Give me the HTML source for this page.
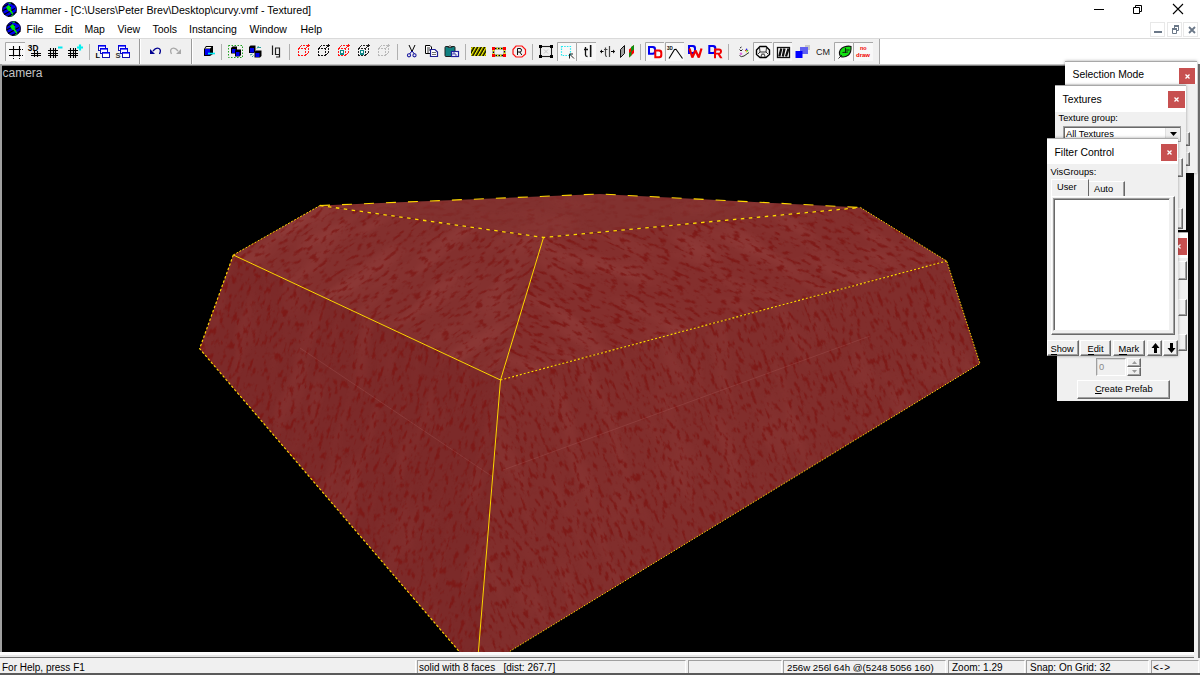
<!DOCTYPE html>
<html><head><meta charset="utf-8">
<style>
*{margin:0;padding:0;box-sizing:border-box}
html,body{width:1200px;height:675px;overflow:hidden;background:#fff;font-family:"Liberation Sans",sans-serif;color:#000}
.a{position:absolute}
.t{position:absolute;white-space:nowrap;line-height:1}
#title{left:0;top:0;width:1200px;height:20px;background:#fff}
#menu{left:0;top:20px;width:1200px;height:18px;background:#fff}
#tb{left:0;top:38px;width:1200px;height:27px;background:#f0f0f0;border-top:1px solid #dadada}
#view{left:0;top:66px;width:1200px;height:592px;background:#000}
#status{left:0;top:658px;width:1200px;height:17px;background:#f0f0f0}
.sp{position:absolute;top:2px;height:13px;border-top:1px solid #a0a0a0;border-left:1px solid #a0a0a0;border-right:1px solid #fff}
.sep{position:absolute;top:6px;width:1px;height:16px;background:#a8a8a8}
.band{position:absolute;top:1px;width:2px;height:24px;border-left:1px solid #a0a0a0;border-right:1px solid #fff}
.pr{position:absolute;top:3px;width:20px;height:19px;background:#f8f8f8;border-top:1px solid #b4b4b4;border-left:1px solid #b4b4b4;border-right:1px solid #fff;border-bottom:1px solid #fff}
.ic{position:absolute;top:5px}
</style></head><body>
<!-- title bar -->
<div id="title" class="a">
  <svg class="a" style="left:1.5px;top:2px" width="15" height="15" viewBox="0 0 15 15"><circle cx="7.5" cy="7.5" r="7.2" fill="#0000f0"/><g stroke="#000" stroke-width="1.1" fill="none"><path d="M1 5 L6 2.5 M0.5 9 L9 4.5 M2 12.5 L13 6.5 M6 14.5 L14.5 10 M9 1 L12 3"/><circle cx="7.5" cy="7.5" r="7" stroke-width=".8"/></g><path d="M4 5.5 L6.5 3 L9.5 6 L8.5 7 L11.5 12 L10.5 12.8 L7 8.5 L6.5 9 Z" fill="#00ee00"/><path d="M6 0.8 L9 0.8 L8 2.5 Z M8.5 14.5 L11 14 L10 12.8 Z" fill="#00e000"/></svg>
  <div class="t" style="left:20.5px;top:5px;font-size:10.65px;color:#000">Hammer - [C:\Users\Peter Brev\Desktop\curvy.vmf - Textured]</div>
  <svg class="a" style="left:1093px;top:3px" width="12" height="12"><path d="M1 6.5 H11" stroke="#000" stroke-width="1"/></svg>
  <svg class="a" style="left:1131px;top:3px" width="12" height="12"><path d="M2.5 4.5 H8.5 V10.5 H2.5 Z M4.5 4.5 V2.5 H10.5 V8.5 H8.5" stroke="#000" stroke-width="1" fill="none"/></svg>
  <svg class="a" style="left:1172px;top:3px" width="12" height="12"><path d="M1 1 L11 11 M11 1 L1 11" stroke="#000" stroke-width="1.1"/></svg>
</div>
<!-- menu bar -->
<div id="menu" class="a">
  <svg class="a" style="left:5.5px;top:0.5px" width="15" height="15" viewBox="0 0 15 15"><circle cx="7.5" cy="7.5" r="7.2" fill="#0000f0"/><g stroke="#000" stroke-width="1.1" fill="none"><path d="M1 5 L6 2.5 M0.5 9 L9 4.5 M2 12.5 L13 6.5 M6 14.5 L14.5 10 M9 1 L12 3"/><circle cx="7.5" cy="7.5" r="7" stroke-width=".8"/></g><path d="M4 5.5 L6.5 3 L9.5 6 L8.5 7 L11.5 12 L10.5 12.8 L7 8.5 L6.5 9 Z" fill="#00ee00"/><path d="M6 0.8 L9 0.8 L8 2.5 Z M8.5 14.5 L11 14 L10 12.8 Z" fill="#00e000"/></svg>
  <div class="t" style="left:26.5px;top:3.5px;font-size:10.5px">File</div>
  <div class="t" style="left:54.5px;top:3.5px;font-size:10.5px">Edit</div>
  <div class="t" style="left:84.5px;top:3.5px;font-size:10.5px">Map</div>
  <div class="t" style="left:117.5px;top:3.5px;font-size:10.5px">View</div>
  <div class="t" style="left:152.5px;top:3.5px;font-size:10.5px">Tools</div>
  <div class="t" style="left:189px;top:3.5px;font-size:10.5px">Instancing</div>
  <div class="t" style="left:249.5px;top:3.5px;font-size:10.5px">Window</div>
  <div class="t" style="left:300.5px;top:3.5px;font-size:10.5px">Help</div>
  <div class="a" style="left:1150px;top:1.5px;width:15px;height:15px;border:1px solid #e8e8e8;background:#fff"><div class="a" style="left:3px;top:8.5px;width:8px;height:2px;background:#6b7888"></div></div>
  <div class="a" style="left:1167px;top:1.5px;width:15px;height:15px;border:1px solid #e8e8e8;background:#fff"><svg class="a" style="left:2.5px;top:2.5px" width="10" height="10"><path d="M1.5 4.5 H5.5 V8.5 H1.5 Z M3.5 4 V1.5 H7.5 V5.5 H6" stroke="#6b7888" fill="none"/><path d="M1 4 H6 M3 1 H8" stroke="#6b7888" stroke-width="2"/></svg></div>
  <div class="a" style="left:1183px;top:1.5px;width:15px;height:15px;border:1px solid #e8e8e8;background:#fff"><svg class="a" style="left:3.5px;top:3.5px" width="8" height="8"><path d="M1 1 L7 7 M7 1 L1 7" stroke="#6b7888" stroke-width="1.8"/></svg></div>
</div>
<!-- toolbar -->
<div id="tb" class="a">
  <div class="a" style="left:880px;top:0;width:320px;height:26px;background:#fff"></div>
</div>
<svg class="a" style="left:0;top:38px" width="880" height="27" viewBox="0 38 880 27">
<defs>
 <pattern id="stripe" width="3" height="4" patternUnits="userSpaceOnUse" patternTransform="rotate(30)"><rect width="3" height="4" fill="#000"/><rect width="1.4" height="4" fill="#ff0"/></pattern>
</defs>
<g fill="none" stroke-linecap="butt">
<!-- pressed boxes -->
<g stroke-width="1">
 <path d="M5.5 61 V42.5 H25" stroke="#a8a8a8"/>
 <path d="M557.5 61 V42.5 H576" stroke="#a8a8a8"/>
 <path d="M576.5 61 V42.5 H596" stroke="#a8a8a8"/>
 <path d="M645.5 61 V42.5 H664" stroke="#a8a8a8"/>
 <path d="M665.5 61 V42.5 H684" stroke="#a8a8a8"/>
 <path d="M753.5 61 V42.5 H772" stroke="#a8a8a8"/>
 <path d="M773.5 61 V42.5 H792" stroke="#a8a8a8"/>
 <path d="M834.5 61 V42.5 H853" stroke="#a8a8a8"/>
 <path d="M853.5 61 V42.5 H873" stroke="#a8a8a8"/>
</g>
<g fill="#f8f8f8" stroke="none">
 <rect x="6" y="43" width="19" height="18"/><rect x="558" y="43" width="18" height="18"/><rect x="577" y="43" width="19" height="18"/>
 <rect x="646" y="43" width="18" height="18"/><rect x="666" y="43" width="18" height="18"/><rect x="754" y="43" width="18" height="18"/>
 <rect x="774" y="43" width="18" height="18"/><rect x="835" y="43" width="18" height="18"/><rect x="854" y="43" width="19" height="18"/>
</g>
<!-- separators -->
<g stroke="#b0b0b0" stroke-width="1">
 <path d="M89.5 44 V60 M221.5 44 V60 M289.5 44 V60 M397.5 44 V60 M465.5 44 V60 M532.5 44 V60 M640.5 44 V60 M728.5 44 V60"/>
</g>
<g stroke-width="1">
 <path d="M139.5 39 V64 M191.5 39 V64" stroke="#9a9a9a"/><path d="M140.5 39 V64 M192.5 39 V64" stroke="#fff"/>
 <path d="M879.5 39 V64" stroke="#a8a8a8"/>
</g>
<!-- 1 grid -->
<g stroke="#000" stroke-width="1.1">
 <path d="M13.5 46 V56.5 M19.5 46 V56.5 M9 49.5 H21 M9 55.5 H21"/>
</g>
<g fill="#000" stroke="none"><rect x="13" y="58" width="1" height="1"/><rect x="19" y="58" width="1" height="1"/><rect x="22" y="49" width="1" height="1"/><rect x="22" y="55" width="1" height="1"/></g>
<!-- 2 3D grid -->
<text x="27.8" y="50.8" font-family="Liberation Sans" font-weight="bold" font-size="8.3" fill="#000" stroke="none">3D</text>
<path d="M34.5 51 V57 M37.5 51 V57 M31 53.5 H41 M31 55.5 H41" stroke="#000" stroke-width="1.1"/>
<!-- 3 grid minus -->
<path d="M50.5 48 V58 M53.5 48 V58 M55.5 48 V58 M48 50.5 H58 M48 53.5 H58 M48 55.5 H58" stroke="#000" stroke-width="1.1"/>
<path d="M58 47.5 H62.5" stroke="#00e8f0" stroke-width="2"/>
<!-- 4 grid plus -->
<path d="M70.5 48 V58 M73.5 48 V58 M75.5 48 V58 M68 50.5 H78 M68 53.5 H78 M68 55.5 H78" stroke="#000" stroke-width="1.1"/>
<path d="M77 47.5 H83 M80 44.5 V50.5" stroke="#00f0f0" stroke-width="2.2"/>
<!-- 6 L windows -->
<text x="95.5" y="57.8" font-family="Liberation Sans" font-weight="bold" font-size="7.5" fill="#000" stroke="none">L</text>
<g stroke="#1010b0" stroke-width="1"><rect x="98.5" y="45.5" width="7" height="5" fill="#f8f8ff"/><rect x="100.5" y="48.5" width="7" height="5" fill="#f8f8ff"/><rect x="102.5" y="52.5" width="7" height="5" fill="#fff"/></g>
<g fill="#0000f0" stroke="none"><rect x="98" y="45" width="8" height="1.6"/><rect x="100" y="48" width="8" height="1.6"/><rect x="102" y="52" width="8" height="1.6"/></g>
<!-- 7 S windows -->
<text x="115.5" y="57.8" font-family="Liberation Sans" font-weight="bold" font-size="7.5" fill="#333" stroke="none">S</text>
<g stroke="#1010b0" stroke-width="1"><rect x="118.5" y="45.5" width="7" height="5" fill="#f8f8ff"/><rect x="120.5" y="48.5" width="7" height="5" fill="#f8f8ff"/><rect x="122.5" y="52.5" width="7" height="5" fill="#fff"/></g>
<g fill="#0000f0" stroke="none"><rect x="118" y="45" width="8" height="1.6"/><rect x="120" y="48" width="8" height="1.6"/><rect x="122" y="52" width="8" height="1.6"/></g>
<!-- 9 undo -->
<path d="M153 51 Q156 47 159 48.5 Q161.5 50 159.5 54" stroke="#000090" stroke-width="1.3"/>
<path d="M150 49 L150 54 L155 54 Z" fill="#000090" stroke="none"/>
<!-- 10 redo -->
<path d="M178 51 Q175 47 172 48.5 Q169.5 50 171.5 54" stroke="#a8a8a8" stroke-width="1.3"/>
<path d="M181 49 L181 54 L176 54 Z" fill="#a8a8a8" stroke="none"/>
<!-- 12 cube arrow -->
<path d="M204 49 L206 46 L213 46 L213 54 L210 56 L204 56 Z" fill="#000" stroke="none"/>
<rect x="205" y="49" width="5" height="6" fill="#0000f0" stroke="none"/><path d="M205 48.5 L206.5 47 L211.5 47 L210 48.5 Z" fill="#fff" stroke="none"/>
<path d="M208 53.5 H215" stroke="#00e8f0" stroke-width="1.6"/>
<!-- 14 group -->
<rect x="228.5" y="45.5" width="14" height="12" stroke="#20a020" stroke-width="1" stroke-dasharray="1.5 1.5"/>
<path d="M231 48 L232.5 46.5 L237 46.5 L237 52 L235.5 53.5 L231 53.5 Z" fill="#000" stroke="none"/><rect x="232" y="49" width="3.5" height="4" fill="#0000f0" stroke="none"/>
<path d="M235 51 L236.5 49.5 L241 49.5 L241 55 L239.5 56.5 L235 56.5 Z" fill="#000" stroke="none"/><rect x="236" y="52" width="3.5" height="4" fill="#0000f0" stroke="none"/>
<!-- 15 ungroup -->
<path d="M249 47 L250.5 45.5 L255.5 45.5 L255.5 51.5 L254 53 L249 53 Z" fill="#000" stroke="none"/><rect x="250" y="48" width="4" height="4.5" fill="#0000f0" stroke="none"/>
<path d="M254.5 52 L256 50.5 L261.5 50.5 L261.5 56 L260 57.5 L254.5 57.5 Z" fill="#000" stroke="none"/><rect x="255.5" y="53" width="4" height="4" fill="#0000f0" stroke="none"/>
<path d="M257 48.5 L258.5 46 M258 47.5 H261 M250 55 L252.5 54 M252 57 L253.5 55.5" stroke="#30a0a0" stroke-width="1"/>
<!-- 16 ig -->
<path d="M272.5 45.5 V55" stroke="#202020" stroke-width="1.2"/>
<path d="M275 48 H279.5 V57 H276 M275.5 48 V54.5 H279" stroke="#202020" stroke-width="1.2"/>
<!-- 18-22 dashed cubes -->
<g fill="#ff1818" stroke="none" shape-rendering="crispEdges"><rect x="298" y="48" width="1" height="1"/><rect x="298" y="49" width="1" height="1"/><rect x="298" y="51" width="1" height="1"/><rect x="298" y="52" width="1" height="1"/><rect x="298" y="54" width="1" height="1"/><rect x="298" y="55" width="1" height="1"/><rect x="299" y="47" width="1" height="1"/><rect x="299" y="48" width="1" height="1"/><rect x="299" y="55" width="1" height="1"/><rect x="300" y="46" width="1" height="1"/><rect x="301" y="45" width="1" height="1"/><rect x="301" y="48" width="1" height="1"/><rect x="301" y="55" width="1" height="1"/><rect x="302" y="48" width="1" height="1"/><rect x="302" y="55" width="1" height="1"/><rect x="303" y="45" width="1" height="1"/><rect x="304" y="45" width="1" height="1"/><rect x="304" y="48" width="1" height="1"/><rect x="304" y="55" width="1" height="1"/><rect x="305" y="48" width="1" height="1"/><rect x="305" y="49" width="1" height="1"/><rect x="305" y="51" width="1" height="1"/><rect x="305" y="52" width="1" height="1"/><rect x="305" y="54" width="1" height="1"/><rect x="305" y="55" width="1" height="1"/><rect x="306" y="45" width="1" height="1"/><rect x="306" y="47" width="1" height="1"/><rect x="306" y="54" width="1" height="1"/><rect x="307" y="45" width="1" height="1"/><rect x="307" y="46" width="1" height="1"/><rect x="307" y="53" width="1" height="1"/><rect x="308" y="44" width="1" height="1"/><rect x="308" y="45" width="1" height="1"/><rect x="308" y="46" width="1" height="1"/><rect x="308" y="48" width="1" height="1"/><rect x="308" y="49" width="1" height="1"/><rect x="308" y="51" width="1" height="1"/><rect x="308" y="52" width="1" height="1"/><rect x="309" y="45" width="1" height="1"/></g><g fill="#101010" stroke="none" shape-rendering="crispEdges"><rect x="318" y="48" width="1" height="1"/><rect x="318" y="49" width="1" height="1"/><rect x="318" y="51" width="1" height="1"/><rect x="318" y="52" width="1" height="1"/><rect x="318" y="54" width="1" height="1"/><rect x="318" y="55" width="1" height="1"/><rect x="319" y="47" width="1" height="1"/><rect x="319" y="48" width="1" height="1"/><rect x="319" y="55" width="1" height="1"/><rect x="320" y="46" width="1" height="1"/><rect x="321" y="45" width="1" height="1"/><rect x="321" y="48" width="1" height="1"/><rect x="321" y="55" width="1" height="1"/><rect x="322" y="48" width="1" height="1"/><rect x="322" y="55" width="1" height="1"/><rect x="323" y="45" width="1" height="1"/><rect x="324" y="45" width="1" height="1"/><rect x="324" y="48" width="1" height="1"/><rect x="324" y="55" width="1" height="1"/><rect x="325" y="48" width="1" height="1"/><rect x="325" y="49" width="1" height="1"/><rect x="325" y="51" width="1" height="1"/><rect x="325" y="52" width="1" height="1"/><rect x="325" y="54" width="1" height="1"/><rect x="325" y="55" width="1" height="1"/><rect x="326" y="45" width="1" height="1"/><rect x="326" y="47" width="1" height="1"/><rect x="326" y="54" width="1" height="1"/><rect x="327" y="45" width="1" height="1"/><rect x="327" y="46" width="1" height="1"/><rect x="327" y="53" width="1" height="1"/><rect x="328" y="44" width="1" height="1"/><rect x="328" y="45" width="1" height="1"/><rect x="328" y="46" width="1" height="1"/><rect x="328" y="48" width="1" height="1"/><rect x="328" y="49" width="1" height="1"/><rect x="328" y="51" width="1" height="1"/><rect x="328" y="52" width="1" height="1"/><rect x="329" y="45" width="1" height="1"/></g><g fill="#ff1818" stroke="none" shape-rendering="crispEdges"><rect x="338" y="48" width="1" height="1"/><rect x="338" y="49" width="1" height="1"/><rect x="338" y="51" width="1" height="1"/><rect x="338" y="52" width="1" height="1"/><rect x="338" y="54" width="1" height="1"/><rect x="338" y="55" width="1" height="1"/><rect x="339" y="47" width="1" height="1"/><rect x="339" y="48" width="1" height="1"/><rect x="339" y="55" width="1" height="1"/><rect x="340" y="46" width="1" height="1"/><rect x="341" y="45" width="1" height="1"/><rect x="341" y="48" width="1" height="1"/><rect x="341" y="55" width="1" height="1"/><rect x="342" y="48" width="1" height="1"/><rect x="342" y="55" width="1" height="1"/><rect x="343" y="45" width="1" height="1"/><rect x="344" y="45" width="1" height="1"/><rect x="344" y="48" width="1" height="1"/><rect x="344" y="55" width="1" height="1"/><rect x="345" y="48" width="1" height="1"/><rect x="345" y="49" width="1" height="1"/><rect x="345" y="51" width="1" height="1"/><rect x="345" y="52" width="1" height="1"/><rect x="345" y="54" width="1" height="1"/><rect x="345" y="55" width="1" height="1"/><rect x="346" y="45" width="1" height="1"/><rect x="346" y="47" width="1" height="1"/><rect x="346" y="54" width="1" height="1"/><rect x="347" y="45" width="1" height="1"/><rect x="347" y="46" width="1" height="1"/><rect x="347" y="53" width="1" height="1"/><rect x="348" y="44" width="1" height="1"/><rect x="348" y="45" width="1" height="1"/><rect x="348" y="46" width="1" height="1"/><rect x="348" y="48" width="1" height="1"/><rect x="348" y="49" width="1" height="1"/><rect x="348" y="51" width="1" height="1"/><rect x="348" y="52" width="1" height="1"/><rect x="349" y="45" width="1" height="1"/></g><rect x="340" y="50" width="4" height="5" fill="#108888" stroke="none"/><rect x="341" y="51" width="2" height="2" fill="#e8ffff" stroke="none"/><g fill="#202020" stroke="none" shape-rendering="crispEdges"><rect x="358" y="48" width="1" height="1"/><rect x="358" y="49" width="1" height="1"/><rect x="358" y="51" width="1" height="1"/><rect x="358" y="52" width="1" height="1"/><rect x="358" y="54" width="1" height="1"/><rect x="358" y="55" width="1" height="1"/><rect x="359" y="47" width="1" height="1"/><rect x="359" y="48" width="1" height="1"/><rect x="359" y="55" width="1" height="1"/><rect x="360" y="46" width="1" height="1"/><rect x="361" y="45" width="1" height="1"/><rect x="361" y="48" width="1" height="1"/><rect x="361" y="55" width="1" height="1"/><rect x="362" y="48" width="1" height="1"/><rect x="362" y="55" width="1" height="1"/><rect x="363" y="45" width="1" height="1"/><rect x="364" y="45" width="1" height="1"/><rect x="364" y="48" width="1" height="1"/><rect x="364" y="55" width="1" height="1"/><rect x="365" y="48" width="1" height="1"/><rect x="365" y="49" width="1" height="1"/><rect x="365" y="51" width="1" height="1"/><rect x="365" y="52" width="1" height="1"/><rect x="365" y="54" width="1" height="1"/><rect x="365" y="55" width="1" height="1"/><rect x="366" y="45" width="1" height="1"/><rect x="366" y="47" width="1" height="1"/><rect x="366" y="54" width="1" height="1"/><rect x="367" y="45" width="1" height="1"/><rect x="367" y="46" width="1" height="1"/><rect x="367" y="53" width="1" height="1"/><rect x="368" y="44" width="1" height="1"/><rect x="368" y="45" width="1" height="1"/><rect x="368" y="46" width="1" height="1"/><rect x="368" y="48" width="1" height="1"/><rect x="368" y="49" width="1" height="1"/><rect x="368" y="51" width="1" height="1"/><rect x="368" y="52" width="1" height="1"/><rect x="369" y="45" width="1" height="1"/></g><rect x="360" y="50" width="4" height="5" fill="#108888" stroke="none"/><rect x="361" y="51" width="2" height="2" fill="#e8ffff" stroke="none"/><g fill="#b8b8b8" stroke="none" shape-rendering="crispEdges"><rect x="378" y="48" width="1" height="1"/><rect x="378" y="49" width="1" height="1"/><rect x="378" y="51" width="1" height="1"/><rect x="378" y="52" width="1" height="1"/><rect x="378" y="54" width="1" height="1"/><rect x="378" y="55" width="1" height="1"/><rect x="379" y="47" width="1" height="1"/><rect x="379" y="48" width="1" height="1"/><rect x="379" y="55" width="1" height="1"/><rect x="380" y="46" width="1" height="1"/><rect x="381" y="45" width="1" height="1"/><rect x="381" y="48" width="1" height="1"/><rect x="381" y="55" width="1" height="1"/><rect x="382" y="48" width="1" height="1"/><rect x="382" y="55" width="1" height="1"/><rect x="383" y="45" width="1" height="1"/><rect x="384" y="45" width="1" height="1"/><rect x="384" y="48" width="1" height="1"/><rect x="384" y="55" width="1" height="1"/><rect x="385" y="48" width="1" height="1"/><rect x="385" y="49" width="1" height="1"/><rect x="385" y="51" width="1" height="1"/><rect x="385" y="52" width="1" height="1"/><rect x="385" y="54" width="1" height="1"/><rect x="385" y="55" width="1" height="1"/><rect x="386" y="45" width="1" height="1"/><rect x="386" y="47" width="1" height="1"/><rect x="386" y="54" width="1" height="1"/><rect x="387" y="45" width="1" height="1"/><rect x="387" y="46" width="1" height="1"/><rect x="387" y="53" width="1" height="1"/><rect x="388" y="44" width="1" height="1"/><rect x="388" y="45" width="1" height="1"/><rect x="388" y="46" width="1" height="1"/><rect x="388" y="48" width="1" height="1"/><rect x="388" y="49" width="1" height="1"/><rect x="388" y="51" width="1" height="1"/><rect x="388" y="52" width="1" height="1"/><rect x="389" y="45" width="1" height="1"/></g>
<!-- 24 scissors -->
<path d="M409 45 L412 51.5 L415 45" stroke="#000" stroke-width="1"/>
<path d="M412 51 L409.5 54 M412 51 L414.5 54" stroke="#0000a0" stroke-width="1"/>
<circle cx="409" cy="55.3" r="1.6" stroke="#2020a0" stroke-width="1.1"/><circle cx="414.5" cy="55.3" r="1.6" stroke="#2020a0" stroke-width="1.1"/>
<!-- 25 copy -->
<path d="M425.5 45.5 H430 L431.5 47 V53.5 H425.5 Z" stroke="#000" fill="#fff" stroke-width="1"/>
<path d="M427 48 H430 M427 50 H430 M427 52 H429" stroke="#000" stroke-width=".8"/>
<path d="M430.5 49.5 H435 L437.5 52 V56.5 H430.5 Z" stroke="#202090" fill="#fff" stroke-width="1.2"/>
<path d="M432 52.5 H436 M432 54.5 H436" stroke="#606060" stroke-width=".9"/>
<!-- 26 paste -->
<rect x="445" y="46.5" width="10" height="10" rx="1" fill="#108080" stroke="#202020" stroke-width="1"/>
<path d="M448 47.5 L450 45.5 L452 47.5 Z" fill="#fff" stroke="#202020" stroke-width=".8"/>
<rect x="451.5" y="51.5" width="7" height="5" fill="#fff" stroke="#2020a0" stroke-width="1.2"/>
<path d="M453 55 V53 H455 V55 H457" stroke="#2020a0" stroke-width=".8"/>
<!-- 28 stripes -->
<rect x="471" y="47" width="15" height="9" fill="url(#stripe)" stroke="none"/>
<!-- 29 dashed box -->
<rect x="493.5" y="48.5" width="11" height="7" stroke="#000" stroke-width="1.6"/>
<rect x="493.5" y="48.5" width="11" height="7" stroke="#ff0" stroke-width="1.6" stroke-dasharray="1.5 1.5"/>
<g fill="#ff0000" stroke="none"><rect x="492" y="47" width="3" height="3"/><rect x="503" y="47" width="3" height="3"/><rect x="492" y="54" width="3" height="3"/><rect x="503" y="54" width="3" height="3"/></g>
<!-- 30 circle R -->
<path d="M516 46 L522 46 L525.5 49.5 L525.5 54 L522 57 L516 57 L513 54 L513 49.5 Z" stroke="#ff1010" stroke-width="1.2"/>
<path d="M517.5 55 V48.5 H520 Q521.5 48.5 521.5 50.2 Q521.5 52 520 52 H517.5 M519.8 52 L521.8 55" stroke="#101010" stroke-width="1"/>
<!-- 32 square with corners -->
<rect x="540.5" y="46.5" width="11" height="10" stroke="#202020" stroke-width="1.1"/>
<path d="M544 49.5 L548 53.5 M548 49.5 L544 53.5" stroke="#c8c8c8" stroke-width="1"/>
<g fill="#000" stroke="none"><rect x="539" y="45" width="3" height="3"/><rect x="550" y="45" width="3" height="3"/><rect x="539" y="55" width="3" height="3"/><rect x="550" y="55" width="3" height="3"/></g>
<!-- 33 select -->
<rect x="561.5" y="46.5" width="9" height="9" stroke="#20e8f0" stroke-width="1.2" stroke-dasharray="1.5 1.2"/>
<path d="M569.5 54 V58.5 M569.5 54 H573 M570 54.5 L574 58.5" stroke="#202020" stroke-width="1"/>
<!-- 34 tl -->
<path d="M585.5 47 V55 Q585.5 56.5 587.5 56.5 M584 49.5 H588 M590.5 45 V57" stroke="#101010" stroke-width="1.3"/><path d="M591.5 45 V57" stroke="#909090" stroke-width="1"/>
<!-- 35 <tl> -->
<path d="M605.5 47.5 V55 Q605.5 56.5 607 56.5 M604 49.5 H607.5 M609.5 46 V57" stroke="#484848" stroke-width="1.2"/>
<path d="M600.5 51.5 H603.5 M611 51.5 H614.5" stroke="#000" stroke-width="1"/>
<path d="M600 51.5 L602 49.5 V53.5 Z M615 51.5 L613 49.5 V53.5 Z" fill="#000" stroke="none"/>
<!-- 36 slanted -->
<path d="M620.5 57.5 V49.5 L624.5 45.5 V53.5 Z" fill="#a0a0a0" stroke="#101010" stroke-width="1"/>
<path d="M629 57.5 V49.5 L634 45 V53 Z" fill="#ff0000" stroke="none"/>
<path d="M631 47 L634 45 V49.5 L631 52 Z M629 53 L631.5 51 V55.5 L629 57.5 Z" fill="#109010" stroke="none"/>
<!-- 38 DD -->
<path fill-rule="evenodd" fill="#0000f0" stroke="none" d="M648 46 H653 Q656 46 656 49 V51.7 Q656 54.7 653 54.7 H648 Z M650 48 H652.5 Q654 48 654 49.5 V51.2 Q654 52.7 652.5 52.7 H650 Z"/><path fill-rule="evenodd" fill="#f00000" stroke="none" d="M654.3 49.5 H659.3 Q662.3 49.5 662.3 52.5 V55.3 Q662.3 58.3 659.3 58.3 H654.3 Z M656.3 51.5 H658.8 Q660.3 51.5 660.3 53.0 V54.8 Q660.3 56.3 658.8 56.3 H656.3 Z"/>
<!-- 39 3D ^ -->
<text x="667" y="49.5" font-family="Liberation Sans" font-weight="bold" font-size="4.5" fill="#000" stroke="none">3D</text>
<path d="M669 58.5 L674.5 49.5 L676 49.3 L682.5 58.5" stroke="#000" stroke-width="1.1"/>
<!-- 40 DW -->
<path fill-rule="evenodd" fill="#0000f0" stroke="none" d="M688 45 H693 Q696 45 696 48 V51 Q696 54 693 54 H688 Z M690 47 H692.5 Q694 47 694 48.5 V50.5 Q694 52 692.5 52 H690 Z"/><path d="M689.5 48.5 L692.3 57.5 L695.5 50.5 L698.8 57.5 L701.5 48.5" stroke="#f00000" stroke-width="2.2" stroke-linejoin="bevel"/>
<!-- 41 DR -->
<path fill-rule="evenodd" fill="#0000f0" stroke="none" d="M708.3 45 H713.3 Q716.3 45 716.3 48 V51 Q716.3 54 713.3 54 H708.3 Z M710.3 47 H712.8 Q714.3 47 714.3 48.5 V50.5 Q714.3 52 712.8 52 H710.3 Z"/><path fill-rule="evenodd" fill="#f00000" stroke="none" d="M714 48.5 H719 Q722 48.5 722 51.5 Q722 53.8 720 54.3 L722.5 58.3 H720 L717.8 54.6 H716 V58.3 H714 Z M716 50.4 H719 Q720 50.4 720 51.6 Q720 52.8 719 52.8 H716 Z"/>
<!-- 43 joystick -->
<path d="M739.5 49.5 L741 51 L742.5 49.5 M740 48 L741.5 47" stroke="#202020" stroke-width="1"/>
<path d="M739.5 55.5 Q741 57.5 744 56 L749 52.5" stroke="#303030" stroke-width="1"/>
<circle cx="741" cy="53.8" r="1.3" fill="#e070e0" stroke="none"/><circle cx="745.8" cy="50.5" r=".8" fill="#e02020" stroke="none"/><circle cx="747.5" cy="50.8" r=".8" fill="#20c020" stroke="none"/><circle cx="746.6" cy="49.4" r=".8" fill="#2020e0" stroke="none"/><circle cx="746.6" cy="51.8" r=".8" fill="#e0e020" stroke="none"/>
<!-- 44 octagon -->
<path d="M760 46.5 H766 L769.5 50 V54.5 L766 57.5 H760 L756.5 54.5 V50 Z" stroke="#000" stroke-width="1.4" fill="#f4f4f4"/>
<path d="M759.5 47.5 L760 52 L758 54 M766.5 47.5 L766 52 L768 54 M760 52 H766 M761 57 L761.5 54.5 H764.5 L765 57" stroke="#202020" stroke-width=".9"/>
<rect x="761.5" y="53" width="3" height="1.5" fill="#a0a0a0" stroke="none"/>
<!-- 45 W stripes -->
<rect x="777.5" y="47.5" width="12" height="10" stroke="#101010" stroke-width="1.3" fill="#fff"/>
<path d="M779.3 56.5 L781.3 48.5 M782.8 56.5 L784.5 48.5 M786 56.5 L788.5 48.5" stroke="#101010" stroke-width="2.3"/>
<!-- 46 blue squares -->
<rect x="805" y="45" width="5" height="5" fill="#c8c8c8" stroke="none"/>
<rect x="800" y="47" width="8" height="7" fill="#6060f0" stroke="none"/>
<rect x="795.5" y="51" width="7" height="7" fill="#0000ff" stroke="none"/>
<!-- 47 CM -->
<text x="816" y="55" font-family="Liberation Sans" font-size="9.5" fill="#202020" stroke="none" transform="translate(816 0) scale(0.95 1) translate(-816 0)">CM</text>
<!-- 48 leaf -->
<path d="M839.5 54 Q839 49 844 47 Q848.5 45.5 851 46.5 Q851.5 52 848.5 55 Q844.5 58 840.5 56.5 Z" fill="#10e010" stroke="#101010" stroke-width="1.1"/>
<path d="M838.5 58.5 L842 55 M845.5 48 V53 M846 50 H849.5 M842.5 52.5 L848 52" stroke="#101010" stroke-width=".9"/>
<!-- 49 no draw -->
<text x="860" y="50" font-family="Liberation Sans" font-weight="bold" font-size="5.5" fill="#f00000" stroke="none">no</text>
<text x="856" y="57" font-family="Liberation Sans" font-weight="bold" font-size="6" fill="#f00000" stroke="none">draw</text>
</g>
</svg>

<!-- viewport -->
<div class="a" style="left:0;top:64px;width:1200px;height:1px;background:#c4c4c4"></div>
<div class="a" style="left:0;top:65px;width:1200px;height:1px;background:#7a7a7a"></div>
<div id="view" class="a">
  <div class="a" style="left:0;top:-2px;width:2px;height:588px;background:#a0a0a0"></div>
  <div class="t" style="left:2.5px;top:1px;font-size:12px;color:#c4c4c4">camera</div>
  <div class="a" style="left:1194px;top:-2px;width:4px;height:594px;background:#f0f0f0"></div>
  <div class="a" style="left:1198px;top:-2px;width:2px;height:594px;background:#6e6e6e"></div>
  <div class="a" style="left:0;top:586px;width:1194px;height:3px;background:#fbfbfb"></div>
  <div class="a" style="left:0;top:589px;width:1194px;height:2px;background:#e6e6e6"></div>
  <div class="a" style="left:0;top:591px;width:1194px;height:1px;background:#6e6e6e"></div>
</div>
<svg class="a" style="left:0;top:0" width="1200" height="675" viewBox="0 0 1200 675">
<defs>
 <clipPath id="vc"><rect x="2" y="66" width="1192" height="586"/></clipPath>
 <clipPath id="cfT"><polygon points="320,205.5 600,194 860.5,207.5 543.5,237.5"/></clipPath><clipPath id="cfUL"><polygon points="233.3,255 320,205.5 543.5,237.5 500.5,380"/></clipPath><clipPath id="cfUR"><polygon points="543.5,237.5 860.5,207.5 946.7,261 500.5,380"/></clipPath><clipPath id="cfLL"><polygon points="199.6,348.7 233.3,255 500.5,380 478.4,652 459.6,652"/></clipPath><clipPath id="cfLR"><polygon points="500.5,380 946.7,261 980,363.5 508.7,652 478.4,652"/></clipPath>
 <filter id="tex" x="0" y="0" width="1" height="1" color-interpolation-filters="sRGB">
  <feTurbulence type="fractalNoise" baseFrequency="0.11 0.25" numOctaves="3" seed="11" result="n"/>
  <feColorMatrix in="n" type="matrix" values="0 0 0 0 0.49  0 0 0 0 0.09  0 0 0 0 0.08  -6 0 0 0 2.65"/>
  <feGaussianBlur stdDeviation="0.5"/>
 </filter>
 <filter id="lite" x="0" y="0" width="1" height="1" color-interpolation-filters="sRGB">
  <feTurbulence type="fractalNoise" baseFrequency="0.012 0.05" numOctaves="2" seed="3"/>
  <feColorMatrix type="matrix" values="0 0 0 0 0.58  0 0 0 0 0.25  0 0 0 0 0.24  1.6 0 0 0 -0.72"/>
 </filter>
</defs>
<g clip-path="url(#vc)">
 <polygon points="320,205.5 600,194 860.5,207.5 543.5,237.5" fill="#82312f"/><g clip-path="url(#cfT)" opacity="0.6"><rect x="90" y="-285" width="1000" height="1000" transform="rotate(-2 590 215)" filter="url(#lite)"/></g><g clip-path="url(#cfT)" opacity="0.25"><rect x="90" y="-285" width="1000" height="1000" transform="rotate(-2 590 215)" filter="url(#tex)"/></g><polygon points="233.3,255 320,205.5 543.5,237.5 500.5,380" fill="#83302e"/><g clip-path="url(#cfUL)"><rect x="-120" y="-200" width="1000" height="1000" transform="rotate(-35 380 300)" filter="url(#lite)"/></g><g clip-path="url(#cfUL)" opacity="0.75"><rect x="-120" y="-200" width="1000" height="1000" transform="rotate(-35 380 300)" filter="url(#tex)"/></g><polygon points="543.5,237.5 860.5,207.5 946.7,261 500.5,380" fill="#842f2d"/><g clip-path="url(#cfUR)"><rect x="240" y="-210" width="1000" height="1000" transform="rotate(25 740 290)" filter="url(#lite)"/></g><g clip-path="url(#cfUR)" opacity="0.85"><rect x="240" y="-210" width="1000" height="1000" transform="rotate(25 740 290)" filter="url(#tex)"/></g><polygon points="199.6,348.7 233.3,255 500.5,380 478.4,652 459.6,652" fill="#7c2a29"/><g clip-path="url(#cfLL)" opacity="0.5"><rect x="-160" y="-50" width="1000" height="1000" transform="rotate(-75 340 450)" filter="url(#lite)"/></g><g clip-path="url(#cfLL)" opacity="0.85"><rect x="-160" y="-50" width="1000" height="1000" transform="rotate(-75 340 450)" filter="url(#tex)"/></g><polygon points="500.5,380 946.7,261 980,363.5 508.7,652 478.4,652" fill="#812e2c"/><g clip-path="url(#cfLR)" opacity="0.5"><rect x="200" y="-50" width="1000" height="1000" transform="rotate(70 700 450)" filter="url(#lite)"/></g><g clip-path="url(#cfLR)" opacity="0.85"><rect x="200" y="-50" width="1000" height="1000" transform="rotate(70 700 450)" filter="url(#tex)"/></g>
 <path d="M300,348 L493,477 M503,470 L870,336" stroke="rgba(200,130,125,0.18)" stroke-width="1" fill="none"/>
 <g fill="none" stroke="#ffd800">
  <path d="M320,205.5 L600,194 L860.5,207.5" stroke-width="1.1" stroke-dasharray="10 12"/>
  <path d="M320,205.5 L543.5,237.5 L860.5,207.5" stroke-width="1.3" stroke-dasharray="3.5 4.5"/>
  <path d="M233.3,255 L500.5,380 M543.5,237.5 L500.5,380 L478.4,652" stroke-width="1"/>
  <path d="M233.3,255 L320,205.5" stroke-width="1" stroke-dasharray="2 1.5"/>
  <path d="M500.5,380 L946.7,261" stroke-width="1.1" stroke-dasharray="2 2"/>
  <path d="M860.5,207.5 L946.7,261 L980,363.5 L508.7,652" stroke-width="1" stroke-dasharray="1.5 1.5"/><path d="M233.3,255 L199.6,348.7 L459.6,652" stroke-width="1.15" stroke-dasharray="2.5 2"/>
 </g>
</g>
</svg>

<!-- floating windows -->
<style>
.win{position:absolute;background:#f0f0f0;box-shadow:0 0 3px rgba(0,0,0,.35)}
.wt{position:absolute;left:0;top:0;right:0;background:#fff;border-top:1px solid #a8a8a8}
.cls{position:absolute;background:#c75050;color:#fff}
.cls svg{position:absolute;left:5px;top:5px}
.dt{position:absolute;white-space:nowrap;line-height:1;font-size:9.3px;color:#000}
.btn{position:absolute;background:#f0f0f0;border-top:1px solid #fff;border-left:1px solid #fff;border-right:1px solid #696969;border-bottom:1px solid #696969;box-shadow:inset -1px -1px 0 #a0a0a0}
</style>
<!-- W1 Selection Mode -->
<div class="win" style="left:1065px;top:61px;width:132px;height:112px">
  <div class="wt" style="height:23px"></div>
  <div class="t" style="left:7.5px;top:9px;font-size:10.4px;color:#000">Selection Mode</div>
  <div class="cls" style="left:114px;top:7px;width:16px;height:16px"><svg width="6" height="6" style="left:6px;top:6px"><path d="M.5 .5 L4.5 4.5 M4.5 .5 L.5 4.5" stroke="#fff" stroke-width="1.3"/></svg></div>
  <div class="btn" style="left:111px;top:71px;width:14px;height:14px"></div>
  <div class="btn" style="left:111px;top:91px;width:14px;height:14px"></div>
</div>
<!-- W2 Textures -->
<div class="win" style="left:1055px;top:85px;width:131px;height:145px">
  <div class="wt" style="height:27px"></div>
  <div class="t" style="left:7.5px;top:9.5px;font-size:10.4px;color:#000">Textures</div>
  <div class="cls" style="left:113px;top:6px;width:17px;height:17px"><svg width="6" height="6" style="left:6px;top:6px"><path d="M.5 .5 L4.5 4.5 M4.5 .5 L.5 4.5" stroke="#fff" stroke-width="1.3"/></svg></div>
  <div class="dt" style="left:3.5px;top:29px">Texture group:</div>
  <div class="a" style="left:8px;top:41px;width:118px;height:16px;background:#fff;border:1px solid #a0a0a0;box-shadow:inset 1px 1px 0 #696969">
    <div class="dt" style="left:2px;top:3px">All Textures</div>
    <div class="a" style="left:101px;top:1px;width:15px;height:13px;background:#f0f0f0;border-left:1px solid #e0e0e0"><svg class="a" style="left:4px;top:4px" width="8" height="5"><path d="M0 0 H7 L3.5 4 Z" fill="#000"/></svg></div>
  </div>
  <div class="btn" style="left:113px;top:73px;width:15px;height:19px"></div>
  <div class="btn" style="left:113px;top:123px;width:15px;height:21px"></div>
</div>
<!-- W4 Prefab -->
<div class="win" style="left:1057px;top:232px;width:131px;height:169px">
  <div class="wt" style="height:26px"></div>
  <div class="cls" style="left:113px;top:6px;width:17px;height:17px"><svg width="6" height="6" style="left:6px;top:6px"><path d="M.5 .5 L4.5 4.5 M4.5 .5 L.5 4.5" stroke="#fff" stroke-width="1.3"/></svg></div>
  <div class="btn" style="left:121px;top:29px;width:9px;height:19px"></div>
  <div class="btn" style="left:121px;top:67px;width:9px;height:17px"></div>
  <div class="btn" style="left:121px;top:102px;width:9px;height:17px"></div>
  <div class="a" style="left:39px;top:126px;width:30px;height:18px;background:#f0f0f0;border-top:1px solid #a0a0a0;border-left:1px solid #a0a0a0;border-bottom:1px solid #fff;border-right:1px solid #fff;box-shadow:inset 1px 1px 0 #d8d8d8"><div class="dt" style="left:2px;top:4px;color:#8a8a8a">0</div></div>
  <div class="btn" style="left:70px;top:126px;width:14px;height:9px"><svg class="a" style="left:4px;top:2px" width="5" height="3"><path d="M0 3 L2.5 0 L5 3Z" fill="#9a9a9a"/></svg></div>
  <div class="btn" style="left:70px;top:135px;width:14px;height:9px"><svg class="a" style="left:4px;top:2px" width="5" height="3"><path d="M0 0 L2.5 3 L5 0Z" fill="#9a9a9a"/></svg></div>
  <div class="btn" style="left:20px;top:148px;width:93px;height:19px"><div class="dt" style="left:17px;top:4px;text-decoration:underline;text-decoration-thickness:1px">C</div><div class="dt" style="left:23.5px;top:4px">reate Prefab</div></div>
</div>
<!-- W3 Filter Control -->
<div class="win" style="left:1047px;top:138px;width:131px;height:218px">
  <div class="wt" style="height:26px"></div>
  <div class="t" style="left:7.5px;top:9.5px;font-size:10.4px;color:#000">Filter Control</div>
  <div class="cls" style="left:114px;top:6px;width:16px;height:17px"><svg width="6" height="6" style="left:6px;top:6px"><path d="M.5 .5 L4.5 4.5 M4.5 .5 L.5 4.5" stroke="#fff" stroke-width="1.3"/></svg></div>
  <div class="dt" style="left:3.5px;top:30px">VisGroups:</div>
  <div class="a" style="left:4px;top:41px;width:38px;height:18px;background:#f0f0f0;border-top:1px solid #fff;border-left:1px solid #fff;border-right:1px solid #696969"></div>
  <div class="dt" style="left:10px;top:45px">User</div>
  <div class="a" style="left:42px;top:43px;width:36px;height:15px;background:#f0f0f0;border-top:1px solid #fff;border-right:1px solid #696969;box-shadow:inset -1px 0 0 #a0a0a0"></div>
  <div class="dt" style="left:47px;top:47px">Auto</div>
  <div class="a" style="left:4px;top:58px;width:124px;height:139px;border-top:1px solid #fff;border-left:1px solid #fff;border-right:1px solid #696969;border-bottom:1px solid #696969;box-shadow:inset -1px -1px 0 #a0a0a0"></div>
  <div class="a" style="left:6px;top:60px;width:117px;height:133px;background:#fff;border-top:1px solid #a0a0a0;border-left:1px solid #a0a0a0;border-right:1px solid #f0f0f0;border-bottom:1px solid #f0f0f0;box-shadow:inset 1px 1px 0 #696969"></div>
  <div class="btn" style="left:0;top:202px;width:32px;height:16px"><div class="dt" style="left:2.5px;top:3.5px">Show</div><div class="a" style="left:3px;top:13px;width:6px;height:1px;background:#000"></div></div>
  <div class="btn" style="left:33px;top:202px;width:31px;height:16px"><div class="dt" style="left:6.5px;top:3.5px">Edit</div><div class="a" style="left:7px;top:13px;width:6px;height:1px;background:#000"></div></div>
  <div class="btn" style="left:66px;top:202px;width:32px;height:16px"><div class="dt" style="left:4.5px;top:3.5px">Mark</div><div class="a" style="left:5px;top:13px;width:8px;height:1px;background:#000"></div></div>
  <div class="btn" style="left:100px;top:202px;width:15px;height:16px"><svg class="a" style="left:3px;top:2px" width="9" height="11"><path d="M4.5 0 L8.5 5 H6 V10 H3 V5 H.5 Z" fill="#000"/></svg></div>
  <div class="btn" style="left:116px;top:202px;width:15px;height:16px"><svg class="a" style="left:3px;top:2px" width="9" height="11"><path d="M4.5 10 L8.5 5 H6 V0 H3 V5 H.5 Z" fill="#000"/></svg></div>
</div>

<!-- status bar -->
<div id="status" class="a">
  <div class="sp" style="left:0;width:416px;border-top-color:#f0f0f0;border-left-color:#f0f0f0"></div>
  <div class="t" style="left:2px;top:5px;font-size:10px;color:#000">For Help, press F1</div>
  <div class="sp" style="left:417px;width:269px"></div>
  <div class="t" style="left:419px;top:5px;font-size:10px">solid with 8 faces &nbsp; [dist: 267.7]</div>
  <div class="sp" style="left:688px;width:94px"></div>
  <div class="sp" style="left:783px;width:163px"></div>
  <div class="t" style="left:787px;top:5px;font-size:9.7px">256w 256l 64h @(5248 5056 160)</div>
  <div class="sp" style="left:948px;width:77px"></div>
  <div class="t" style="left:952px;top:5px;font-size:10px">Zoom: 1.29</div>
  <div class="sp" style="left:1026px;width:123px"></div>
  <div class="t" style="left:1030px;top:5px;font-size:10px">Snap: On Grid: 32</div>
  <div class="sp" style="left:1151px;width:48px"></div>
  <div class="t" style="left:1153px;top:5px;font-size:10px;letter-spacing:1px">&lt;-&gt;</div>
  <div class="a" style="left:0;top:15px;width:1200px;height:2px;background:#5a5a5a"></div>
</div>
</body></html>
